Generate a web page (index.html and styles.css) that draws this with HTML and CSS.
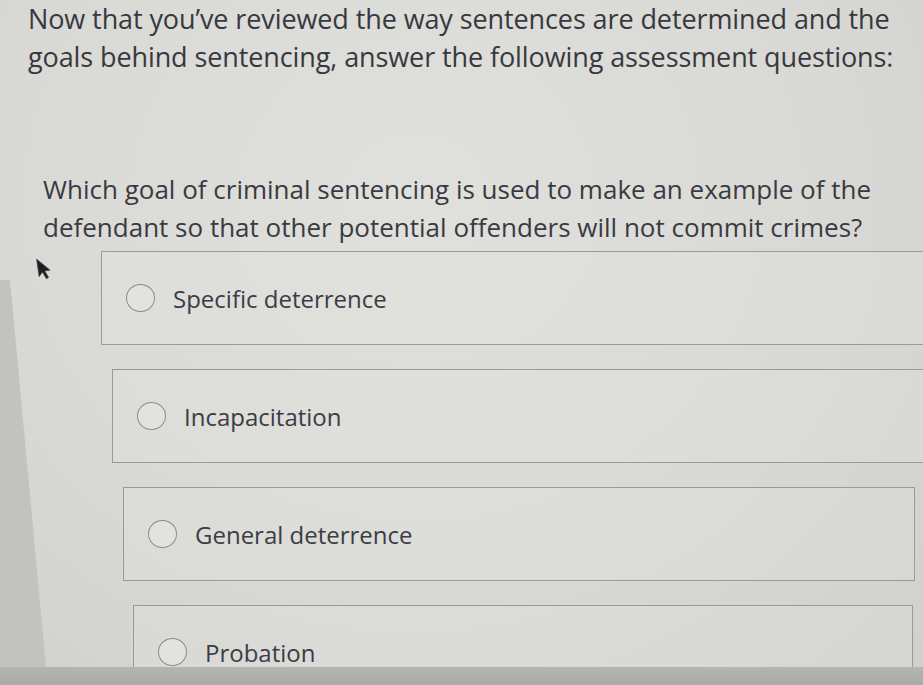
FILE: index.html
```html
<!DOCTYPE html>
<html lang="en">
<head>
<meta charset="utf-8">
<title>Assessment</title>
<link rel="stylesheet" href="styles.css">
</head>
<body>
<div class="screen">
  <main class="content">
    <h1 class="intro">Now that you’ve reviewed the way sentences are determined and the<br>goals behind sentencing, answer the following assessment questions:</h1>
    <section class="question">
      <p class="prompt">Which goal of criminal sentencing is used to make an example of the<br>defendant so that other potential offenders will not commit crimes?</p>
      <div class="options">
        <label class="option opt-1"><span class="radio"></span><span class="label">Specific deterrence</span></label>
        <label class="option opt-2"><span class="radio"></span><span class="label">Incapacitation</span></label>
        <label class="option opt-3"><span class="radio"></span><span class="label">General deterrence</span></label>
        <label class="option opt-4"><span class="radio"></span><span class="label">Probation</span></label>
      </div>
    </section>
    <svg class="cursor" width="16" height="24" viewBox="0 0 16 24"><path d="M2 1 L2 19 L6 15 L9 22 L11.5 21 L8.5 14 L14 14 Z" fill="#1e1e22" stroke="#555" stroke-width="0.6"/></svg>
  </main>
  <div class="bezel"></div>
</div>
</body>
</html>
```
FILE: styles.css
```css
html, body {
  margin: 0;
  padding: 0;
  height: 685px;
  overflow: hidden;
}
body {
  font-family: "Open Sans", "DejaVu Sans", sans-serif;
  color: #3a3a42;
  background: #d6d6d2;
}
.screen {
  display: flex;
  flex-direction: column;
  height: 685px;
}
.content {
  position: relative;
  height: 667px;
  overflow: hidden;
  background: radial-gradient(ellipse at 45% 30%, #e0e0dc 0%, #d9d9d5 55%, #d0d0cc 100%);
}
.content::before {
  content: "";
  position: absolute;
  inset: 0;
  background: linear-gradient(90deg, #c2c2bf, #cbcbc8);
  clip-path: polygon(0 280px, 10px 280px, 46px 667px, 0 667px);
  pointer-events: none;
}
.intro {
  position: relative;
  margin: 0 0 0 28px;
  font-size: 27px;
  font-weight: 500;
  line-height: 38px;
  color: #38383f;
  letter-spacing: -0.1px;
}
.question {
  position: relative;
  margin-top: 94px;
}
.prompt {
  margin: 0 0 0 43px;
  font-size: 26px;
  font-weight: 500;
  line-height: 38px;
  color: #3a3a42;
}
.options {
  display: flex;
  flex-direction: column;
  gap: 24px;
  margin-top: 5px;
}
.option {
  display: flex;
  align-items: center;
  gap: 18px;
  height: 94px;
  box-sizing: border-box;
  border: 1.5px solid #9a9a9c;
  padding-left: 24px;
  background: rgba(230,230,226,0.3);
}
.opt-1 { margin-left: 101px; margin-right: -10px; }
.opt-2 { margin-left: 112px; margin-right: -10px; }
.opt-3 { margin-left: 123px; margin-right: 8px; }
.opt-4 { margin-left: 133px; margin-right: 10px; }
.radio {
  width: 27px;
  height: 26px;
  border-radius: 50%;
  border: 1.5px solid #8c8c8e;
  background: #e2e2de;
  flex: none;
}
.label {
  font-size: 24px;
  font-weight: 500;
  color: #3c3c46;
}
.cursor {
  position: absolute;
  left: 36px;
  top: 257px;
  transform: rotate(-8deg);
}
.bezel {
  height: 18px;
  background: linear-gradient(180deg, #b4b4b1, #aaaaa7);
}
```
